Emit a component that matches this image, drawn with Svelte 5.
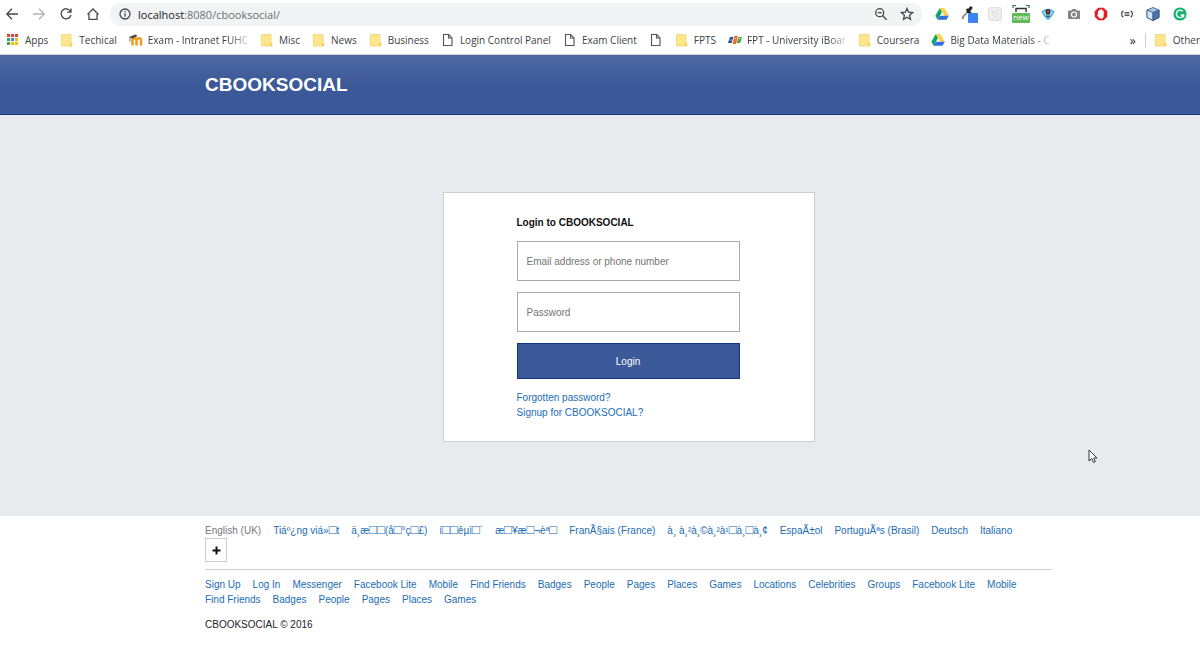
<script>
    const bookmarks = [
        { icon: "apps", label: "Apps" },
        { icon: "folder", label: "Techical" },
        { icon: "moodle", label: "Exam - Intranet FUHC", cut: true },
        { icon: "folder", label: "Misc" },
        { icon: "folder", label: "News" },
        { icon: "folder", label: "Business" },
        { icon: "doc", label: "Login Control Panel" },
        { icon: "doc", label: "Exam Client" },
        { icon: "doc", label: "" },
        { icon: "folder", label: "FPTS" },
        { icon: "fpt", label: "FPT - University iBoar", cut: true },
        { icon: "folder", label: "Coursera" },
        { icon: "drive", label: "Big Data Materials - C", cut: true },
    ];

    const extensions = ["drive", "picker", "faded", "capture", "eye", "camera", "hand", "braces", "cube", "grammar"];

    const languages = [
        "Tiáº¿ng viá»□t",
        "ä¸æ□□(å□°ç□£)",
        "í□□êµì□´",
        "æ□¥æ□¬èª□",
        "FranÃ§ais (France)",
        "à¸ à¸²à¸©à¸²à¹□à¸□à¸¢",
        "EspaÃ±ol",
        "PortuguÃªs (Brasil)",
        "Deutsch",
        "Italiano",
    ];

    const links = [
        "Sign Up", "Log In", "Messenger", "Facebook Lite", "Mobile", "Find Friends", "Badges", "People",
        "Pages", "Places", "Games", "Locations", "Celebrities", "Groups", "Facebook Lite", "Mobile",
        "Find Friends", "Badges", "People", "Pages", "Places", "Games",
    ];

    const appColors = ["#ea4335", "#ea4335", "#ea4335", "#34a853", "#4285f4", "#fbbc05", "#34a853", "#fbbc05", "#fbbc05"];

    let email = $state("");
    let password = $state("");
</script>

{#snippet icon(name)}
    {#if name === "apps"}
        <svg class="icon" viewBox="0 0 14 14">
            {#each appColors as color, i}
                <rect x={1 + (i % 3) * 4} y={1 + Math.floor(i / 3) * 4} width="3" height="3" fill={color} />
            {/each}
        </svg>
    {:else if name === "folder"}
        <svg class="icon" viewBox="0 0 14 14">
            <path d="M1.500 1.500h9.500v8.700h1v2.800H1.500z" fill="#ffe58b" stroke="#f3d36b" stroke-width=".8" />
            <path d="M9.700 10.200h2.300V13H9.700z" fill="#f7d25e" />
        </svg>
    {:else if name === "doc"}
        <svg class="icon" viewBox="0 0 14 14">
            <path d="M2.500 1.500h5.200l3.300 3.400v7.600H2.500zM7.500 1.500V5H11" fill="#fff" stroke="#505357" stroke-width="1.1" />
        </svg>
    {:else if name === "moodle"}
        <svg class="icon" viewBox="0 0 14 14">
            <path d="M3.500 12.500V7q0-1.700 1.800-1.700T7.500 7v5.500M7.500 7q0-1.700 2.300-1.700T12 7v5.500" fill="none" stroke="#f39a1f" stroke-width="2.500" />
            <path d="M0 4L6.500 1.500l2 1.500-5 2.400z" fill="#494643" />
            <path d="M1 4v4.500" stroke="#494643" stroke-width=".8" />
        </svg>
    {:else if name === "fpt"}
        <svg class="icon" viewBox="0 0 14 14">
            <path d="M2 4h3.400L3.700 10H0z" fill="#204e9b" />
            <path d="M6.400 3h3.400l-1.700 8H4.700z" fill="#f26522" />
            <path d="M10.500 4H14l-1.700 6H8.800z" fill="#48a842" />
            <path d="M2 7h2M6.700 5.500h1.500M11 5.700h1.500" stroke="#fff" stroke-width=".7" />
        </svg>
    {:else if name === "drive"}
        <svg class="icon" viewBox="0 0 14 14">
            <path d="M4.800 1L.3 8.800l2.200 3.900L7 4.900z" fill="#0da960" />
            <path d="M4.800 1h4.500l4.500 7.800H9.300z" fill="#ffcf48" />
            <path d="M2.500 12.700l2.300-3.900h9l-2.300 3.900z" fill="#2f72df" />
        </svg>
    {:else if name === "picker"}
        <svg class="icon large" viewBox="0 0 18 18">
            <path d="M2.500 14l.8-2.500L8.500 6" fill="none" stroke="#888" stroke-width="1.800" />
            <path d="M6.500 4l4.500 4.500" stroke="#222" stroke-width="1.800" />
            <path d="M8 6.500L11 2.800" stroke="#222" stroke-width="3" stroke-linecap="round" />
            <rect x="8" y="8" width="10" height="10" rx="1" fill="#3b82f3" />
        </svg>
    {:else if name === "faded"}
        <svg class="icon" viewBox="0 0 14 14" fill="none" stroke="#dcdcdc">
            <rect x=".7" y=".7" width="12.6" height="12.6" rx="1" fill="#f1f1f1" />
            <circle cx="7" cy="7" r="2.500" />
            <path d="M3 3h2M9 3h2M3 11h2M9 11h2" />
        </svg>
    {:else if name === "capture"}
        <svg class="icon large" viewBox="0 0 18 18">
            <path d="M1 3V.5h3M14 .5h3V3" fill="none" stroke="#2d7a35" stroke-width="1.200" />
            <path d="M4 7V3.500h10V7" fill="none" stroke="#333" stroke-width="1.500" />
            <rect x="0" y="8" width="18" height="10" rx="1" fill="#62b957" />
            <text x="9" y="15" text-anchor="middle" font-size="8" fill="#fff">new</text>
        </svg>
    {:else if name === "eye"}
        <svg class="icon" viewBox="0 0 14 14">
            <path d="M.5 4.500Q7-1 13.500 4.500 12 9 7 13.200 2 9 .5 4.500z" fill="#35a7df" />
            <path d="M2 5q5-4 10 0-2 4-5 6Q4 9 2 5z" fill="#a5e1f5" />
            <path d="M4.500 4.500a2.500 2.500 0 0 1 5 0q0 1.500-1 2.500v3h-3V7q-1-1-1-2.500z" fill="#202e35" />
            <circle cx="7" cy="4.500" r="1.200" fill="#e9473f" />
            <path d="M7 7v2.200" stroke="#fff" />
        </svg>
    {:else if name === "camera"}
        <svg class="icon" viewBox="0 0 14 14">
            <path d="M1.500 4h3l1-1.500h3l1 1.500h3v7.500h-11z" fill="#858585" stroke="#858585" stroke-linejoin="round" />
            <circle cx="7" cy="7.500" r="2.500" fill="#858585" stroke="#fff" stroke-width="1.200" />
        </svg>
    {:else if name === "hand"}
        <svg class="icon" viewBox="0 0 14 14">
            <path d="M4.300.7h5.400l3.600 3.600v5.400l-3.600 3.600H4.300L.7 9.700V4.300z" fill="#e51c24" />
            <path d="M4 7V4.300q.7-1 1.300 0V3q.8-1 1.500 0v-.5q.8-1 1.500 0V4q.8-1 1.400 0v5q-.3 2.800-2.700 2.800Q5 11.700 3 8q.3-1 1-.2z" fill="#fff" />
        </svg>
    {:else if name === "braces"}
        <svg class="icon" viewBox="0 0 14 14" fill="none" stroke="#303030">
            <path d="M3.500 4Q2 4 2 5.500T1 7q1 0 1 1.500T3.500 10M10.500 4q1.500 0 1.500 1.500T13 7q-1 0-1 1.500T10.500 10" stroke-width="1.200" />
            <path d="M4.500 5.500h5M4.500 7h5M4.500 8.500h5" stroke-width=".8" />
        </svg>
    {:else if name === "cube"}
        <svg class="icon" viewBox="0 0 14 14" stroke="#35507d" stroke-width=".8" stroke-linejoin="round">
            <path d="M7 .5l6 2.500v7.500l-6 3-6-3V3z" fill="#a9c7ea" />
            <path d="M1 3l6 2.500v8l-6-3z" fill="#d1e3f6" />
            <path d="M13 3L7 5.500v8l6-3z" fill="#4b73a8" />
        </svg>
    {:else if name === "grammar"}
        <svg class="icon" viewBox="0 0 14 14">
            <circle cx="7" cy="7" r="6.600" fill="#15b36b" />
            <path d="M9.700 4.300A3.700 3.700 0 1 0 10.600 8H7.800M10.600 8v2.300" fill="none" stroke="#fff" stroke-width="1.400" />
        </svg>
    {/if}
{/snippet}

<div class="browser">
    <div class="toolbar">
        <div class="nav">
            <button aria-label="Back">
                <svg class="icon" viewBox="0 0 14 14"><path d="M13 7H2M7 1.800L1.800 7 7 12.200" /></svg>
            </button>
            <button class="disabled" aria-label="Forward">
                <svg class="icon" viewBox="0 0 14 14"><path d="M1 7h11M7 1.800L12.200 7 7 12.200" /></svg>
            </button>
            <button aria-label="Reload">
                <svg class="icon" viewBox="0 0 14 14"><path d="M11.500 4.300A5 5 0 1 0 12 8M12 1.500v3.700H8.300" /></svg>
            </button>
            <button aria-label="Home">
                <svg class="icon" viewBox="0 0 14 14"><path d="M1.500 7.500L7 2l5.500 5.500M3 7v5.300h8V7" /></svg>
            </button>
        </div>
        <div class="address">
            <svg class="icon" viewBox="0 0 14 14"><circle cx="7" cy="7" r="5" /><path d="M7 6.200v3.600M7 4v1.200" /></svg>
            <span class="url">localhost<span>:8080/cbooksocial/</span></span>
            <button aria-label="Zoom">
                <svg class="icon" viewBox="0 0 14 14"><circle cx="5.700" cy="5.700" r="4" /><path d="M8.700 8.700l4 4M3.700 5.700h4" /></svg>
            </button>
            <button aria-label="Bookmark this page">
                <svg class="icon" viewBox="0 0 14 14"><path d="M7 1.500l1.600 3.700 4 .4-3 2.700.9 4L7 10.200l-3.500 2.100.9-4-3-2.700 4-.4z" /></svg>
            </button>
        </div>
        <div class="extensions">
            {#each extensions as name}
                <button aria-label={name}>{@render icon(name)}</button>
            {/each}
        </div>
    </div>
    <div class="bookmarks">
        {#each bookmarks as item}
            <a href="#bookmark" aria-label={item.label || "Page"}>
                {@render icon(item.icon)}
                {#if item.label}<span class:cut={item.cut}>{item.label}</span>{/if}
            </a>
        {/each}
        <button class="more">»</button>
        <a class="other" href="#bookmark">{@render icon("folder")}<span>Other</span></a>
    </div>
</div>

<header>
    <div class="container"><h1>CBOOKSOCIAL</h1></div>
</header>

<main>
    <form class="card" onsubmit={(e) => e.preventDefault()}>
        <h2>Login to CBOOKSOCIAL</h2>
        <input type="text" aria-label="Email address or phone number" placeholder="Email address or phone number" bind:value={email} />
        <input type="password" aria-label="Password" placeholder="Password" bind:value={password} />
        <button class="login">Login</button>
        <div class="help">
            <a href="#forgot">Forgotten password?</a>
            <a href="#signup">Signup for CBOOKSOCIAL?</a>
        </div>
    </form>
</main>

<footer>
    <div class="container">
        <div class="links">
            <span>English (UK)</span>
            {#each languages as language}
                <a href="#language">
                    {#each language.split(/(□)/) as part}{#if part === "□"}<b>{part}</b>{:else}{part}{/if}{/each}
                </a>
            {/each}
        </div>
        <button class="plus" aria-label="More languages">
            <svg viewBox="0 0 9 9"><path d="M4.500 .5v8M.5 4.500h8" /></svg>
        </button>
        <hr />
        <div class="links">
            {#each links as link}
                <a href="#page">{link}</a>
            {/each}
        </div>
        <p>CBOOKSOCIAL © 2016</p>
    </div>
</footer>

<svg class="cursor" viewBox="0 0 10 15"><path d="M1 1v11l2.700-2.500L5.500 13.500l1.800-.8L5.700 9H9z" /></svg>

<style>
    :global(body) {
        margin: 0;
        background: #fff;
        overflow-x: hidden;
        font: 10px/15px "Liberation Sans", Arial, sans-serif;
        color: #1d2129;
    }
    a {
        color: #216db4;
        text-decoration: none;
    }
    button {
        padding: 0;
        border: 0;
        background: none;
        font: inherit;
        color: inherit;
    }
    .icon {
        display: block;
        flex: none;
        width: 14px;
        height: 14px;
    }
    .icon.large {
        width: 18px;
        height: 18px;
    }

    /* browser bar */
    .browser {
        font-family: "Open Sans", sans-serif;
        border-bottom: 1px solid #d5d5d5;
    }
    .toolbar {
        display: flex;
        align-items: center;
        height: 28px;
        padding: 0 7px 0 5px;
    }
    .nav {
        display: flex;
        gap: 13px;
        margin-right: 10px;
    }
    .nav .icon, .address .icon {
        fill: none;
        stroke: #45484c;
        stroke-width: 1.3;
    }
    .nav .disabled .icon {
        stroke: #b0b2b5;
    }
    .address {
        display: flex;
        flex: 1;
        align-items: center;
        gap: 12px;
        height: 23px;
        padding: 0 8px;
        border-radius: 12px;
        background: #f1f3f4;
        font-size: 11px;
    }
    .url {
        flex: 1;
        margin-left: -6px;
        color: #202124;
    }
    .url span {
        color: #6b6f74;
    }
    .extensions {
        display: grid;
        grid-template-columns: repeat(10, 1fr);
        justify-items: center;
        align-items: center;
        width: 264px;
        margin-left: 7px;
    }
    .bookmarks {
        display: flex;
        align-items: center;
        gap: 12px;
        height: 24px;
        padding: 0 0 2px 6px;
        white-space: nowrap;
    }
    .bookmarks a {
        display: flex;
        flex: none;
        align-items: center;
        gap: 5px;
        color: #3c4043;
    }
    .cut {
        mask-image: linear-gradient(to left, rgba(0, 0, 0, 0.2), #000 18px);
    }
    .more {
        margin-left: auto;
        font-size: 12px;
    }
    .bookmarks .other {
        margin-left: -3px;
        padding-left: 8px;
        border-left: 1px solid #d0d0d0;
    }

    /* page */
    header, main, footer {
        padding-left: 57px;
    }
    .container {
        max-width: 847px;
        margin: 0 auto;
    }
    header {
        background: linear-gradient(#4e69a2, #3b5998 50%);
        border-bottom: 1px solid #133783;
    }
    h1 {
        margin: 0;
        font-size: 19px;
        line-height: 59px;
        color: #fff;
    }
    main {
        padding-top: 77px;
        padding-bottom: 74px;
        background: #e9eaed;
    }
    .card {
        display: flex;
        flex-direction: column;
        gap: 11px;
        box-sizing: border-box;
        max-width: 372px;
        margin: 0 auto;
        padding: 22px 74px 21px 73px;
        border: 1px solid #ccced2;
        background: #fff;
    }
    h2 {
        margin: 0;
        font-size: 10px;
        color: #111;
    }
    input {
        box-sizing: border-box;
        height: 40px;
        padding: 0 9px;
        border: 1px solid #aaa;
        font: inherit;
    }
    input::placeholder {
        color: #757575;
    }
    .login {
        height: 36px;
        border: 1px solid #133783;
        background: #3b5998;
        color: #fff;
    }
    .help a {
        display: block;
    }
    footer {
        padding-top: 7px;
    }
    .links {
        display: flex;
        flex-wrap: wrap;
        column-gap: 12px;
    }
    .links span {
        color: #777;
    }
    .links b {
        font-size: 13px;
        font-weight: normal;
        line-height: 1;
    }
    .plus {
        display: block;
        width: 22px;
        height: 24px;
        border: 1px solid #ccc;
    }
    .plus svg {
        display: block;
        width: 9px;
        height: 9px;
        margin: 0 auto;
        stroke: #111;
        stroke-width: 2;
    }
    hr {
        margin: 7px 0;
        border: 0;
        border-top: 1px solid #d0d0d0;
    }
    p {
        margin: 10px 0;
    }
    .cursor {
        position: absolute;
        top: 449px;
        left: 1088px;
        width: 10px;
        height: 15px;
        fill: #fff;
        stroke: #333;
        stroke-width: 1;
    }
</style>
